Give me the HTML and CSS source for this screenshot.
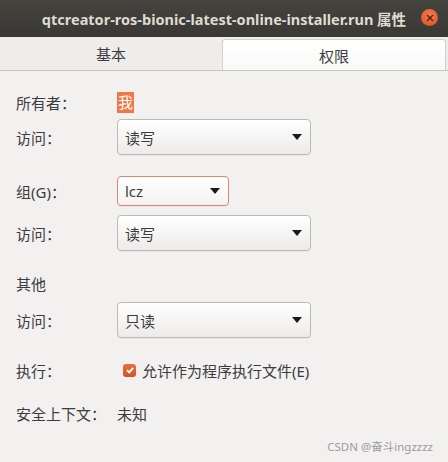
FILE: index.html
```html
<!DOCTYPE html>
<html lang="zh-CN">
<head>
<meta charset="UTF-8">
<title>qtcreator-ros-bionic-latest-online-installer.run 属性</title>
<link rel="stylesheet" href="styles.css">
</head>
<body>

<div class="titlebar">
    <span class="title">qtcreator-ros-bionic-latest-online-installer.run 属性</span>
    <span class="close">
        <svg width="8" height="8" viewBox="0 0 8 8"><path d="M1 1L7 7M7 1L1 7" stroke="#4a2516" stroke-width="1.3"/></svg>
    </span>
</div>

<div class="tabs">
    <div class="tab">基本</div>
    <div class="tab active">权限</div>
</div>

<div class="content">
    <div class="row owner-row">
        <div class="label">所有者：</div>
        <span class="owner">我</span>
    </div>
    <div class="row combo-row first">
        <div class="label">访问：</div>
        <div class="combo wide"><span>读写</span><span class="arrow"></span></div>
    </div>

    <div class="row group-row">
        <div class="label">组(G)：</div>
        <div class="combo narrow focused"><span>lcz</span><span class="arrow"></span></div>
    </div>
    <div class="row combo-row second">
        <div class="label">访问：</div>
        <div class="combo wide"><span>读写</span><span class="arrow"></span></div>
    </div>

    <div class="row other-row">
        <div class="label">其他</div>
    </div>
    <div class="row combo-row third">
        <div class="label">访问：</div>
        <div class="combo wide"><span>只读</span><span class="arrow"></span></div>
    </div>

    <div class="row exec-row">
        <div class="label">执行：</div>
        <label class="check">
            <span class="box">
                <svg width="10" height="10" viewBox="0 0 10 10"><path d="M2 5.2L4.2 7.4L8.2 2.8" fill="none" stroke="#fff" stroke-width="1.8"/></svg>
            </span>
            允许作为程序执行文件(E)
        </label>
    </div>

    <div class="row security-row">
        <div class="label">安全上下文：</div>
        <span class="value">未知</span>
    </div>
</div>

<div class="watermark">CSDN @奋斗ingzzzz</div>

</body>
</html>
```

FILE: styles.css
```css
body {
    margin: 0;
    width: 448px;
    height: 462px;
    overflow: hidden;
    background-color: #f2f1f0;
    font-family: "Noto Sans", "Noto Sans CJK SC", sans-serif;
    color: #3c3c3c;
    font-size: 15px;
}
.titlebar {
    height: 37px;
    background: linear-gradient(#45433e, #393834);
    display: flex;
    align-items: center;
    justify-content: center;
    position: relative;
}
.title {
    color: #dfdbd2;
    font-weight: bold;
    font-size: 14.5px;
}
.close {
    position: absolute;
    right: 10px;
    top: 9px;
    width: 17px;
    height: 17px;
    border-radius: 50%;
    background: radial-gradient(circle at 50% 35%, #f47a4e, #df4f1c);
    display: flex;
    align-items: center;
    justify-content: center;
}
.tabs {
    display: flex;
    height: 33px;
    border-bottom: 1px solid #c9c6c1;
    background-color: #eeedeb;
}
.tab {
    flex: 1;
    display: flex;
    align-items: center;
    justify-content: center;
    font-size: 15px;
    color: #3c3c3c;
}
.tab.active {
    margin-top: 2px;
    margin-right: 2px;
    background: linear-gradient(#ffffff, #f9f9f8);
    border: 1px solid #d4d1cc;
    border-bottom: none;
    border-radius: 3px 3px 0 0;
}
.content {
    padding: 0 16px;
}
.row {
    display: flex;
    align-items: center;
}
.label {
    width: 101px;
    flex-shrink: 0;
}
.owner-row {
    height: 22px;
    margin-top: 20px;
}
.owner {
    background-color: #f07746;
    color: #fff;
    line-height: 21px;
    padding: 0 1px;
}
.combo-row {
    height: 36px;
}
.combo-row.first {
    margin-top: 6px;
}
.combo-row.second {
    margin-top: 9px;
}
.combo-row.third {
    margin-top: 8px;
}
.group-row {
    height: 30px;
    margin-top: 21px;
}
.other-row {
    height: 22px;
    margin-top: 21px;
}
.exec-row {
    height: 22px;
    margin-top: 21px;
}
.security-row {
    height: 22px;
    margin-top: 21px;
}
.combo {
    box-sizing: border-box;
    display: flex;
    align-items: center;
    justify-content: space-between;
    padding: 0 8px 0 7px;
    border: 1px solid #bdbab4;
    border-radius: 4px;
    background: linear-gradient(#ffffff, #ecebe9);
    box-shadow: 0 1px 0 rgba(0, 0, 0, 0.04);
}
.combo.wide {
    width: 194px;
    height: 36px;
}
.combo.narrow {
    width: 112px;
    height: 30px;
}
.combo.focused {
    border-color: #e5876a;
    background: linear-gradient(#ffffff, #f4f3f2);
}
.arrow {
    width: 0;
    height: 0;
    border-left: 5px solid transparent;
    border-right: 5px solid transparent;
    border-top: 6px solid #1a1a1a;
}
.check {
    display: flex;
    align-items: center;
    margin-left: 6px;
}
.box {
    width: 13px;
    height: 13px;
    border-radius: 3px;
    background: linear-gradient(#e8703f, #cf5424);
    display: flex;
    align-items: center;
    justify-content: center;
    margin-right: 6px;
}
.watermark {
    position: absolute;
    right: 15px;
    top: 438px;
    font-size: 11.5px;
    color: #9b9b9b;
}
```
